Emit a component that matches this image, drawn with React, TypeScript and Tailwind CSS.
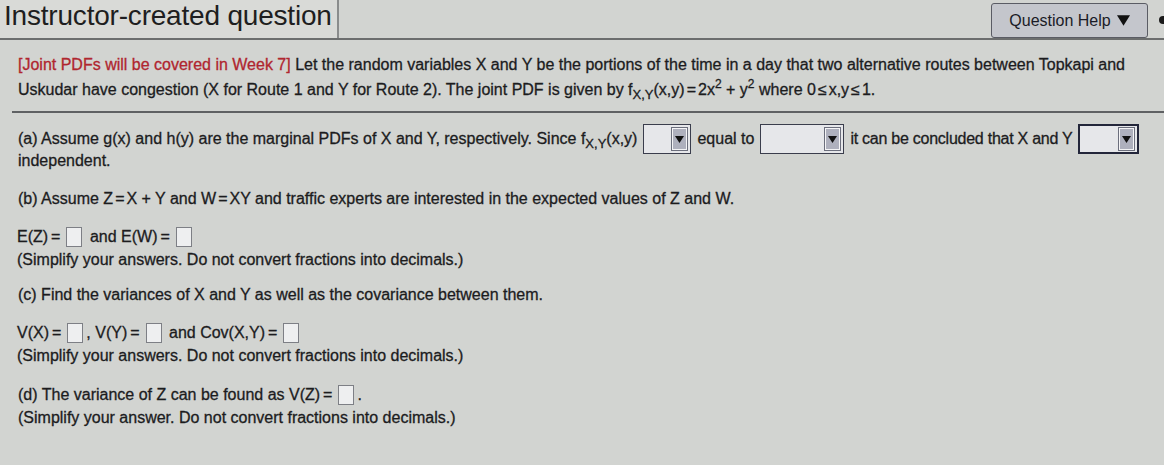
import React from 'react';

const Tri = ({ className = '' }: { className?: string }) => (
    <svg viewBox="0 0 10 8" className={className}>
        <polygon points="0,0 10,0 5,8" fill="#111" />
    </svg>
);

const Dropdown = ({ width, strong = false }: { width: string; strong?: boolean }) => (
    <span
        className={`inline-flex items-center justify-end h-[30px] ${width} ${strong ? 'border-2 border-[#23263a]' : 'border border-[#3a3d4c]'} bg-[#e6e7ea] pr-[3px] align-middle`}
    >
        <span className="flex items-center justify-center w-[15px] h-[22px] bg-[#aeb0bd] border border-[#f4f4f6] shadow-[0_0_0_1px_#6b6e7c]">
            <Tri className="w-[9px] h-[9px]" />
        </span>
    </span>
);

const Box = () => (
    <span className="inline-block w-[16px] h-[20px] border border-[#7d7f85] bg-[#eeeff0] align-middle mx-[3px] -mt-[2px]" />
);

const Eq = () => <span className="mx-[3px]">=</span>;

const Sub = ({ children }: { children: React.ReactNode }) => (
    <span className="relative top-[4px] text-[13px]">{children}</span>
);

const Sup = ({ children }: { children: React.ReactNode }) => (
    <span className="relative -top-[7px] text-[12px]">{children}</span>
);

export default function App() {
    return (
        <div
            className="w-[1164px] h-[465px] overflow-hidden bg-[#d2d4d1] text-[#1c1c1e]"
            style={{ fontFamily: '"Liberation Sans", Arial, sans-serif' }}
        >
            {/* HEADER */}
            <div className="flex items-stretch h-[40px] border-b-2 border-[#6c6e6e]">
                <div className="w-[339px] shrink-0 border-r-2 border-[#8a8c8c] bg-[#d9dad7] pl-[4px]">
                    <span className="text-[28px] leading-[32px] text-[#1e1e20] tracking-[-0.2px]">
                        Instructor-created question
                    </span>
                </div>
                <div className="flex-1" />
                <div className="flex items-start pt-[3px]">
                    <button className="flex items-center gap-[6px] h-[35px] w-[157px] justify-center rounded-[3px] border border-[#5a5c64] bg-[#c4c6cc] text-[16px] text-[#1a1b26]">
                        Question Help
                        <Tri className="w-[13px] h-[11px]" />
                    </button>
                    <span className="mt-[13px] ml-[11px] -mr-[3px] w-[8px] h-[8px] rounded-full bg-[#1a1a1a]" />
                </div>
            </div>

            <div className="text-[16px] [-webkit-text-stroke:0.3px_currentColor]">
                {/* PROBLEM STATEMENT */}
                <div className="mt-[12px] pl-[18px] pr-[20px] leading-[25px] whitespace-nowrap">
                    <div>
                        <span className="text-[#b0262f]">[Joint PDFs will be covered in Week 7]</span> Let the random
                        variables X and Y be the portions of the time in a day that two alternative routes between
                        Topkapi and
                    </div>
                    <div>
                        Uskudar have congestion (X for Route 1 and Y for Route 2). The joint PDF is given by f
                        <Sub>X,Y</Sub>(x,y)<span className="mx-[2px]">=</span>2x<Sup>2</Sup> + y<Sup>2</Sup> where 0
                        <span className="mx-[2px]">≤</span>x,y<span className="mx-[2px]">≤</span>1.
                    </div>
                </div>

                <div className="mt-[7px] ml-[12px] h-[2px] bg-[#5f6163]" />

                {/* PARTS */}
                <div className="pl-[18px]">
                    <div className="mt-[15px] leading-[22px]">
                        <div className="flex items-center h-[22px] whitespace-nowrap">
                            <span>
                                (a) Assume g(x) and h(y) are the marginal PDFs of X and Y, respectively. Since f
                                <Sub>X,Y</Sub>(x,y)
                            </span>
                            <span className="ml-[6px]">
                                <Dropdown width="w-[48px]" />
                            </span>
                            <span className="ml-[6px]">equal to</span>
                            <span className="ml-[6px]">
                                <Dropdown width="w-[84px]" />
                            </span>
                            <span className="ml-[6px] tracking-[-0.25px]">it can be concluded that X and Y</span>
                            <span className="ml-[6px]">
                                <Dropdown width="w-[61px]" strong />
                            </span>
                        </div>
                        <div>independent.</div>
                    </div>

                    <div className="mt-[15px] leading-[23px]">
                        (b) Assume Z<span className="mx-[2px]">=</span>X + Y and W<span className="mx-[2px]">=</span>XY
                        and traffic experts are interested in the expected values of Z and W.
                    </div>

                    <div className="mt-[15px] leading-[23px] -ml-[1px]">
                        <div>
                            E(Z)
                            <Eq />
                            <Box /> and E(W)
                            <Eq />
                            <Box />
                        </div>
                        <div>(Simplify your answers. Do not convert fractions into decimals.)</div>
                    </div>

                    <div className="mt-[12px] leading-[23px]">
                        (c) Find the variances of X and Y as well as the covariance between them.
                    </div>

                    <div className="mt-[15px] leading-[23px] -ml-[1px]">
                        <div>
                            V(X)
                            <Eq />
                            <Box />, V(Y)
                            <Eq />
                            <Box /> and Cov(X,Y)
                            <Eq />
                            <Box />
                        </div>
                        <div>(Simplify your answers. Do not convert fractions into decimals.)</div>
                    </div>

                    <div className="mt-[16px] leading-[23px]">
                        <div>
                            (d) The variance of Z can be found as V(Z)
                            <Eq />
                            <Box />.
                        </div>
                        <div>(Simplify your answer. Do not convert fractions into decimals.)</div>
                    </div>
                </div>
            </div>
        </div>
    );
}
